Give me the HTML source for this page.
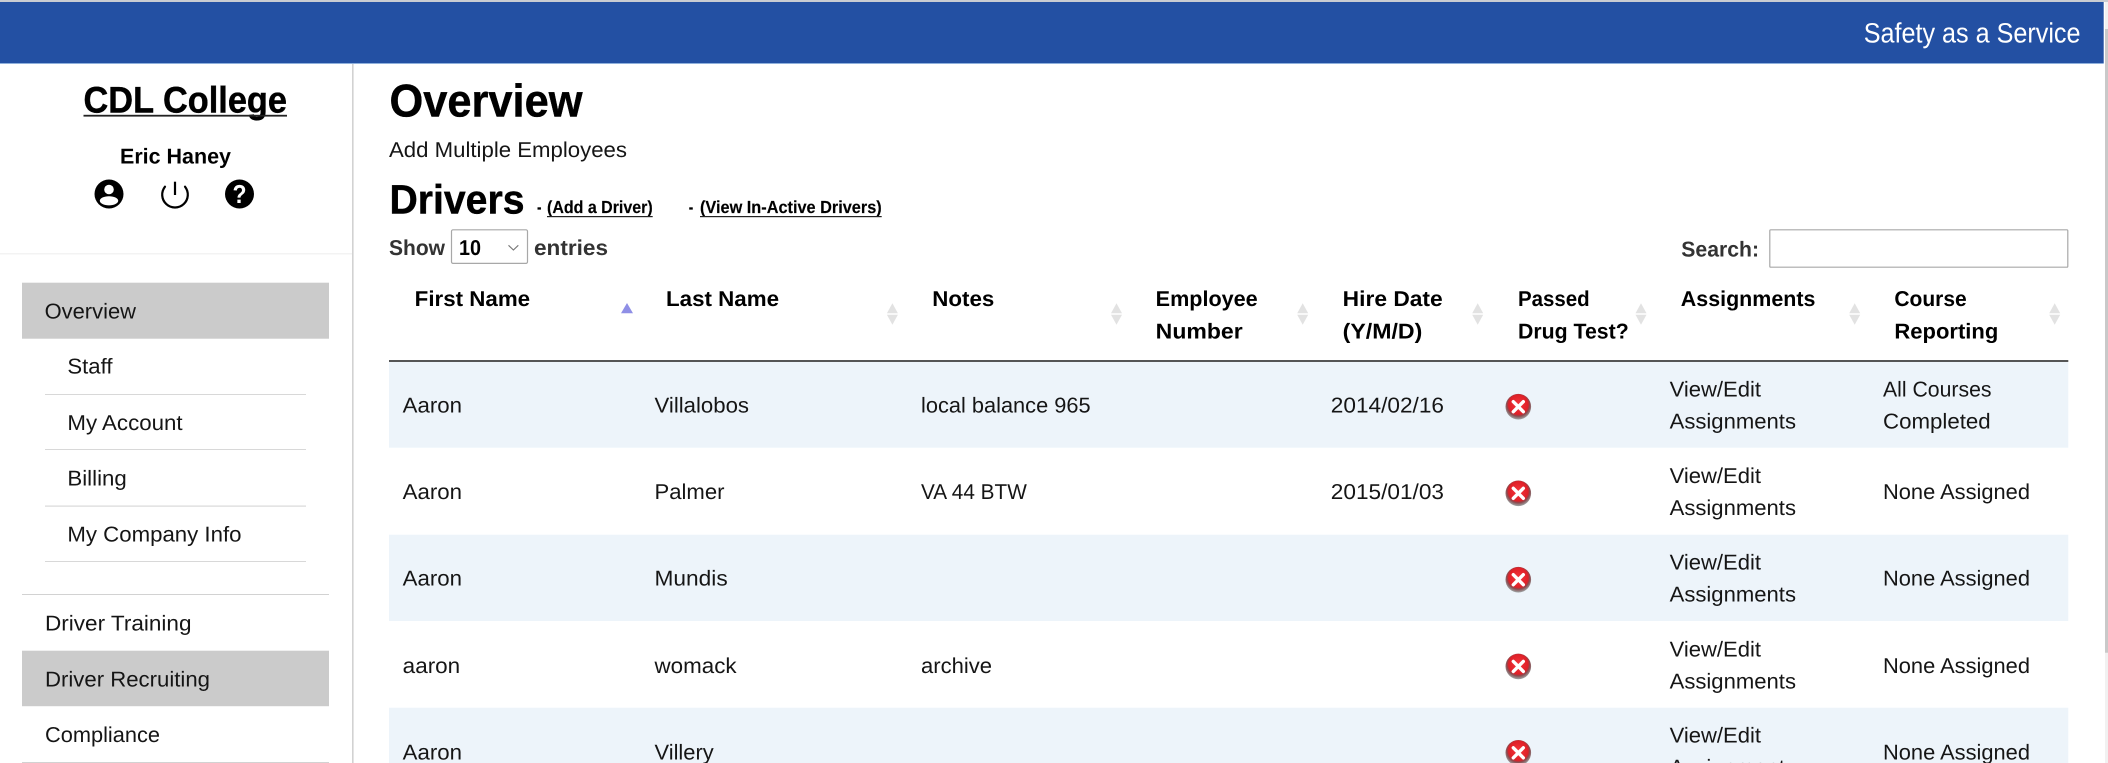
<!DOCTYPE html>
<html lang="en"><head><meta charset="utf-8"><title>Overview - CDL College</title>
<style>
html,body{margin:0;padding:0;background:#fff;width:2108px;height:763px;overflow:hidden}
svg{display:block}
text{font-family:"Liberation Sans",Arial,sans-serif;font-size:21.5px;fill:#151515;text-rendering:geometricPrecision}
.b{font-weight:700;fill:#000}
.g{font-weight:700;fill:#333}
.h{font-weight:700;fill:#000;stroke:#000;stroke-width:.45px}
.l{font-size:17.5px;stroke-width:.15px}
</style></head><body>
<svg width="2108" height="763" viewBox="0 0 2108 763" xmlns="http://www.w3.org/2000/svg">
<defs>
<radialGradient id="r" cx="50%" cy="42%" r="56%"><stop offset="0" stop-color="#f4363c"/><stop offset=".68" stop-color="#df2028"/><stop offset=".8" stop-color="#8a4a4e"/><stop offset="1" stop-color="#9a9a9a"/></radialGradient>
<g id="x"><circle r="12.8" fill="url(#r)"/><path d="M-5-5 5 5M5-5-5 5" stroke="#fff" stroke-width="3.4" stroke-linecap="round"/></g>
<g id="s"><path d="M0-10.5 5.5-.5H-5.5Z" fill="#e2e2e2"/><path d="M0 10.5 5.5 .5H-5.5Z" fill="#e2e2e2" transform="translate(0 .5)"/></g>
</defs>
<rect width="2108" height="763" fill="#fff"/>
<!-- header -->
<rect width="2108" height="2" fill="#c9ccd2"/>
<rect x="0" y="2" width="2103.7" height="61" fill="#2350a3"/>
<rect x="0" y="63" width="2103.7" height="1" fill="#8fb0dc"/>
<text x="1863.7" y="42.7" style="fill:#fff;font-size:28px" textLength="216.8" lengthAdjust="spacingAndGlyphs">Safety as a Service</text>
<!-- scrollbar -->
<rect x="2105" y="2" width="3" height="761" fill="#f1f1f1"/>
<rect x="2105" y="29" width="3" height="623.7" fill="#c9c9c9"/>
<!-- sidebar -->
<rect x="352" y="64" width="1.6" height="699" fill="#d2d2d2"/>
<text x="83.5" y="112.3" class="h" style="font-size:37px" textLength="203.5" lengthAdjust="spacingAndGlyphs">CDL College</text>
<rect x="83.5" y="114.8" width="203.5" height="1.8" fill="#222"/>
<text x="120" y="163.6" class="b" textLength="111" lengthAdjust="spacingAndGlyphs">Eric Haney</text>
<circle cx="109" cy="194" r="14.5" fill="#000"/><circle cx="109" cy="189.5" r="4.8" fill="#fff"/><ellipse cx="109" cy="200.8" rx="9.2" ry="4.6" fill="#fff"/>
<path d="M165 186.7A12.8 12.8 0 1 0 185 186.7" fill="none" stroke="#000" stroke-width="2.2" stroke-linecap="round"/><path d="M175 181.7V195" stroke="#000" stroke-width="2.2"/>
<circle cx="239.5" cy="194" r="14.5" fill="#000"/><text x="232.5" y="203" style="fill:#fff;font-size:26px;font-weight:700" textLength="14" lengthAdjust="spacingAndGlyphs">?</text>
<rect x="0" y="253" width="352" height="1.5" fill="#f3f3f3"/>
<rect x="22" y="282.7" width="307" height="56" fill="#cbcbcb"/>
<text x="44.6" y="318.5" textLength="91.4" lengthAdjust="spacingAndGlyphs">Overview</text>
<text x="67.4" y="373.5" textLength="45.1" lengthAdjust="spacingAndGlyphs">Staff</text>
<rect x="45" y="394" width="261" height="1" fill="#d8d8d8"/>
<text x="67.4" y="430" textLength="115.2" lengthAdjust="spacingAndGlyphs">My Account</text>
<rect x="45" y="449" width="261" height="1" fill="#d8d8d8"/>
<text x="67.4" y="485.5" textLength="59.4" lengthAdjust="spacingAndGlyphs">Billing</text>
<rect x="45" y="505.5" width="261" height="1.2" fill="#d8d8d8"/>
<text x="67.4" y="541.5" textLength="174.1" lengthAdjust="spacingAndGlyphs">My Company Info</text>
<rect x="45" y="561" width="261" height="1" fill="#d8d8d8"/>
<rect x="22" y="594" width="307" height="1" fill="#d2d2d2"/>
<text x="45" y="630.5" textLength="146.5" lengthAdjust="spacingAndGlyphs">Driver Training</text>
<rect x="22" y="650.7" width="307" height="55.5" fill="#cbcbcb"/>
<text x="45" y="686.5" textLength="165" lengthAdjust="spacingAndGlyphs">Driver Recruiting</text>
<text x="45" y="742" textLength="115" lengthAdjust="spacingAndGlyphs">Compliance</text>
<rect x="22" y="762" width="307" height="1" fill="#d2d2d2"/>
<!-- headings -->
<text x="389.5" y="116.3" class="h" style="font-size:46px" textLength="193" lengthAdjust="spacingAndGlyphs">Overview</text>
<text x="389" y="157" textLength="238" lengthAdjust="spacingAndGlyphs">Add Multiple Employees</text>
<text x="389.5" y="213.3" class="h" style="font-size:41px" textLength="135" lengthAdjust="spacingAndGlyphs">Drivers</text>
<text x="537" y="213" class="h l" textLength="4.5" lengthAdjust="spacingAndGlyphs">-</text>
<text x="547" y="213" class="h l" textLength="105.7" lengthAdjust="spacingAndGlyphs">(Add a Driver)</text>
<rect x="547" y="216" width="105.7" height="1.2" fill="#222"/>
<text x="688.7" y="213" class="h l" textLength="4.5" lengthAdjust="spacingAndGlyphs">-</text>
<text x="700" y="213" class="h l" textLength="181.7" lengthAdjust="spacingAndGlyphs">(View In-Active Drivers)</text>
<rect x="700" y="216" width="181.7" height="1.2" fill="#222"/>
<!-- controls -->
<text x="389" y="255" class="g" textLength="56" lengthAdjust="spacingAndGlyphs">Show</text>
<rect x="451.5" y="229.8" width="76" height="33.6" rx="1.5" fill="#fff" stroke="#a8a8a8" stroke-width="1.2"/>
<text x="459" y="255" class="b" textLength="22" lengthAdjust="spacingAndGlyphs">10</text>
<path d="M508.5 245.3 513.4 250 518.3 245.3" fill="none" stroke="#777" stroke-width="1.1"/>
<text x="534" y="255" class="g" textLength="74" lengthAdjust="spacingAndGlyphs">entries</text>
<text x="1681.3" y="256.7" class="g" textLength="77.7" lengthAdjust="spacingAndGlyphs">Search:</text>
<rect x="1769.8" y="229.8" width="298" height="37.4" rx="1" fill="#fff" stroke="#a8a8a8" stroke-width="1.2"/>
<!-- table header -->
<text x="414.7" y="306.2" class="b" textLength="115.4" lengthAdjust="spacingAndGlyphs">First Name</text>
<path d="M627 303 633 313.3H621Z" fill="#8f8fe6"/>
<text x="666" y="306.2" class="b" textLength="113" lengthAdjust="spacingAndGlyphs">Last Name</text>
<use href="#s" x="892.4" y="313.7"/>
<text x="932.3" y="306.2" class="b" textLength="62" lengthAdjust="spacingAndGlyphs">Notes</text>
<use href="#s" x="1116.5" y="313.7"/>
<text x="1155.7" y="306.2" class="b" textLength="102" lengthAdjust="spacingAndGlyphs">Employee</text>
<text x="1155.7" y="338.4" class="b" textLength="87" lengthAdjust="spacingAndGlyphs">Number</text>
<use href="#s" x="1302.7" y="313.7"/>
<text x="1342.7" y="306.2" class="b" textLength="100" lengthAdjust="spacingAndGlyphs">Hire Date</text>
<text x="1342.7" y="338.4" class="b" textLength="79.6" lengthAdjust="spacingAndGlyphs">(Y/M/D)</text>
<use href="#s" x="1477.7" y="313.7"/>
<text x="1518" y="306.2" class="b" textLength="71.7" lengthAdjust="spacingAndGlyphs">Passed</text>
<text x="1518" y="338.4" class="b" textLength="110.7" lengthAdjust="spacingAndGlyphs">Drug Test?</text>
<use href="#s" x="1641" y="313.7"/>
<text x="1680.8" y="306.2" class="b" textLength="134.6" lengthAdjust="spacingAndGlyphs">Assignments</text>
<use href="#s" x="1854.7" y="313.7"/>
<text x="1894.4" y="306.2" class="b" textLength="72.3" lengthAdjust="spacingAndGlyphs">Course</text>
<text x="1894.4" y="338.4" class="b" textLength="103.9" lengthAdjust="spacingAndGlyphs">Reporting</text>
<use href="#s" x="2054.7" y="313.7"/>
<rect x="389" y="360" width="1679.3" height="2" fill="#555"/>
<!-- rows -->
<rect x="389" y="362" width="1679.3" height="85.7" fill="#edf4fa"/>
<rect x="389" y="534.7" width="1679.3" height="86.3" fill="#edf4fa"/>
<rect x="389" y="707.7" width="1679.3" height="55.3" fill="#edf4fa"/>
<!-- row 1 -->
<text x="402.7" y="412.3" textLength="59.3" lengthAdjust="spacingAndGlyphs">Aaron</text>
<text x="654.5" y="412.3" textLength="94.5" lengthAdjust="spacingAndGlyphs">Villalobos</text>
<text x="921" y="412.3" textLength="169.6" lengthAdjust="spacingAndGlyphs">local balance 965</text>
<text x="1330.8" y="412.3" textLength="113.2" lengthAdjust="spacingAndGlyphs">2014/02/16</text>
<use href="#x" x="1518.3" y="406.7"/>
<text x="1669.6" y="396.5" textLength="91.4" lengthAdjust="spacingAndGlyphs">View/Edit</text>
<text x="1669.6" y="428.5" textLength="126.4" lengthAdjust="spacingAndGlyphs">Assignments</text>
<text x="1883" y="396.5" textLength="108.5" lengthAdjust="spacingAndGlyphs">All Courses</text>
<text x="1883" y="428.5" textLength="107.7" lengthAdjust="spacingAndGlyphs">Completed</text>
<!-- row 2 -->
<text x="402.7" y="499" textLength="59.3" lengthAdjust="spacingAndGlyphs">Aaron</text>
<text x="654.5" y="499" textLength="70" lengthAdjust="spacingAndGlyphs">Palmer</text>
<text x="921" y="499" textLength="105.8" lengthAdjust="spacingAndGlyphs">VA 44 BTW</text>
<text x="1330.8" y="499" textLength="113.2" lengthAdjust="spacingAndGlyphs">2015/01/03</text>
<use href="#x" x="1518.3" y="493.3"/>
<text x="1669.6" y="483.2" textLength="91.4" lengthAdjust="spacingAndGlyphs">View/Edit</text>
<text x="1669.6" y="515.2" textLength="126.4" lengthAdjust="spacingAndGlyphs">Assignments</text>
<text x="1883" y="499" textLength="147" lengthAdjust="spacingAndGlyphs">None Assigned</text>
<!-- row 3 -->
<text x="402.7" y="585.4" textLength="59.3" lengthAdjust="spacingAndGlyphs">Aaron</text>
<text x="654.5" y="585.4" textLength="73.2" lengthAdjust="spacingAndGlyphs">Mundis</text>
<use href="#x" x="1518.3" y="579.7"/>
<text x="1669.6" y="569.5" textLength="91.4" lengthAdjust="spacingAndGlyphs">View/Edit</text>
<text x="1669.6" y="601.5" textLength="126.4" lengthAdjust="spacingAndGlyphs">Assignments</text>
<text x="1883" y="585.4" textLength="147" lengthAdjust="spacingAndGlyphs">None Assigned</text>
<!-- row 4 -->
<text x="402.7" y="673" textLength="57.5" lengthAdjust="spacingAndGlyphs">aaron</text>
<text x="654.5" y="673" textLength="82.1" lengthAdjust="spacingAndGlyphs">womack</text>
<text x="921" y="673" textLength="71" lengthAdjust="spacingAndGlyphs">archive</text>
<use href="#x" x="1518.3" y="666.4"/>
<text x="1669.6" y="656.3" textLength="91.4" lengthAdjust="spacingAndGlyphs">View/Edit</text>
<text x="1669.6" y="688.3" textLength="126.4" lengthAdjust="spacingAndGlyphs">Assignments</text>
<text x="1883" y="673" textLength="147" lengthAdjust="spacingAndGlyphs">None Assigned</text>
<!-- row 5 -->
<text x="402.7" y="759.7" textLength="59.3" lengthAdjust="spacingAndGlyphs">Aaron</text>
<text x="654.5" y="759.7" textLength="59.2" lengthAdjust="spacingAndGlyphs">Villery</text>
<use href="#x" x="1518.3" y="752.8"/>
<text x="1669.6" y="742.7" textLength="91.4" lengthAdjust="spacingAndGlyphs">View/Edit</text>
<text x="1669.6" y="774.7" textLength="126.4" lengthAdjust="spacingAndGlyphs">Assignments</text>
<text x="1883" y="759.7" textLength="147" lengthAdjust="spacingAndGlyphs">None Assigned</text>
</svg>
</body></html>
